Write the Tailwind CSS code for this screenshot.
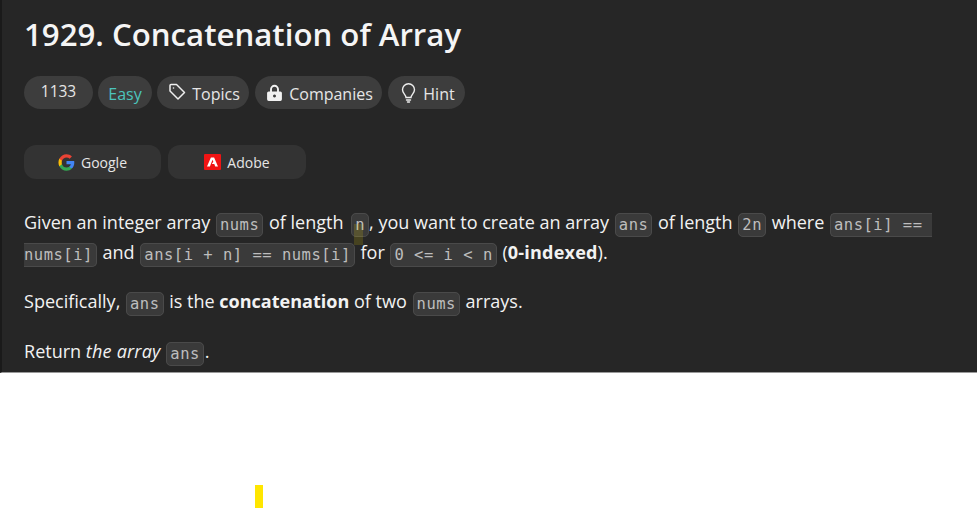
<!DOCTYPE html>
<html>
<head>
<meta charset="utf-8">
<script src="https://cdn.jsdelivr.net/npm/@tailwindcss/browser@4"></script>
</head>
<body class="relative bg-white w-[977px] h-[509px] overflow-hidden font-['Open_Sans','Noto_Sans',sans-serif]">
<main class="h-[373px] bg-[#262626] border-l-2 border-[#1a1a1a] border-b border-b-[#999] pl-[22px] pt-[12px] text-white overflow-hidden">
  <h1 class="text-[31.200px] leading-[44px] font-semibold text-[#f5f5f5]">1929. Concatenation of Array</h1>
  <div class="flex gap-[5px] mt-[20px] text-[#e6e6e6] text-[16px]">
    <span class="h-[33px] w-[69px] rounded-full bg-[#3d3d3d] flex items-center justify-center text-[15.500px] pb-[1px]">1133</span>
    <span class="h-[33px] w-[54px] rounded-full bg-[#3d3d3d] flex items-center justify-center text-[#4cc4bc] pt-[2px]">Easy</span>
    <span class="h-[33px] w-[92px] rounded-full bg-[#3d3d3d] flex items-center justify-center gap-[6px] pl-[2px]">
      <svg class="w-[18px] h-[18px] mb-[1px]" viewBox="0 0 18 18" fill="none" stroke="#eee" stroke-width="1.500" stroke-linejoin="round"><path d="M2 2.500 Q2 1.500 3 1.500 H8.500 L16.500 9.500 L10 16 L2 8 Z"/><circle cx="5.500" cy="5" r=".8" fill="#eee" stroke="none"/></svg>
      <span class="pt-[2px]">Topics</span>
    </span>
    <span class="ml-[1px] h-[33px] w-[127px] rounded-full bg-[#3d3d3d] flex items-center justify-center gap-[6px] pl-[2px]">
      <svg class="w-[17px] h-[18px]" viewBox="0 0 16 17" fill="#f2f2f2"><path fill-rule="evenodd" d="M2.500 7 H3.800 V5 a4.200 4.200 0 0 1 8.400 0 V7 H13.500 A1.500 1.500 0 0 1 15 8.500 V14.500 A1.500 1.500 0 0 1 13.500 16 H2.500 A1.500 1.500 0 0 1 1 14.500 V8.500 A1.500 1.500 0 0 1 2.500 7 Z M5.600 7 H10.400 V5 a2.400 2.400 0 0 0 -4.800 0 Z M8 10 a1.400 1.400 0 1 0 .01 0 Z"/></svg>
      <span class="pt-[2px]">Companies</span>
    </span>
    <span class="ml-[1px] h-[33px] w-[77px] rounded-full bg-[#3d3d3d] flex items-center justify-center gap-[7px] pl-[3px]">
      <svg class="w-[15px] h-[20px]" viewBox="0 0 15 20" fill="none" stroke="#eee" stroke-width="1.400" stroke-linecap="round"><path d="M5 14.500 C5 11.500 1.500 10.500 1.500 6.800 a6 6 0 0 1 12 0 C13.500 10.500 10 11.500 10 14.500 Z"/><path d="M5.500 17 H9.500 M6.500 19 H8.500"/></svg>
      <span class="pt-[2px]">Hint</span>
    </span>
  </div>
  <div class="flex gap-[7px] mt-[36px] text-[14px] text-[#e6e6e6]">
    <span class="h-[34px] w-[137px] rounded-[12px] bg-[#333333] flex items-center justify-center gap-[6px]">
      <svg class="w-[17px] h-[17px]" viewBox="0 0 48 48"><path fill="#4285F4" d="M46 24.500c0-1.600-.1-3.100-.4-4.500H24v8.700h12.400c-.5 2.800-2.100 5.200-4.500 6.800v5.600h7.300C43.500 36.700 46 31.100 46 24.500z"/><path fill="#34A853" d="M24 47c6.100 0 11.300-2 15.100-5.500l-7.300-5.600c-2 1.400-4.600 2.200-7.800 2.200-6 0-11-4-12.800-9.500H3.700v5.800C7.500 42 15.200 47 24 47z"/><path fill="#FBBC05" d="M11.200 28.600c-.5-1.400-.7-2.900-.7-4.600s.3-3.200.7-4.600v-5.800H3.700C2.200 16.600 1.300 20.200 1.300 24s.9 7.400 2.400 10.400l7.500-5.800z"/><path fill="#EA4335" d="M24 10c3.400 0 6.400 1.200 8.800 3.400l6.500-6.500C35.300 3.200 30.100 1 24 1 15.200 1 7.500 6 3.700 13.600l7.500 5.800C13 14 18 10 24 10z"/></svg>
      <span>Google</span>
    </span>
    <span class="h-[34px] w-[138px] rounded-[12px] bg-[#333333] flex items-center justify-center gap-[6px]">
      <svg class="w-[17px] h-[16px]" viewBox="0 0 17 16"><rect width="17" height="16" rx="1" fill="#f01414"/><path fill="#fff" d="M6.900 3.500 H10.100 L14 12.500 H11.200 L10.300 10 H7.800 L9.300 7.800 L8.500 5.800 L5.900 12.500 H3 Z"/></svg>
      <span>Adobe</span>
    </span>
  </div>
  <div class="mt-[30px] text-[18.050px] text-[#f2f2f2]">
    <p class="leading-[27px] whitespace-nowrap">Given an integer array <code class="mx-[1px] align-[-1px] font-['DejaVu_Sans_Mono',monospace] text-[15.500px] tracking-[.5px] text-[#bdbdbd] bg-[#3a3a3a] border border-[#4a4a4a] rounded-[5px] px-[3px] py-[2px]">nums</code> of length <code class="ml-[3px] mr-[0px] align-[-1px] font-['DejaVu_Sans_Mono',monospace] text-[15.500px] tracking-[.5px] text-[#bdbdbd] bg-[#3a3a3a] border border-[#4a4a4a] rounded-[5px] px-[3px] py-[2px]">n</code>, you want to create an array <code class="mx-[1px] align-[-1px] font-['DejaVu_Sans_Mono',monospace] text-[15.500px] tracking-[.5px] text-[#bdbdbd] bg-[#3a3a3a] border border-[#4a4a4a] rounded-[5px] px-[3px] py-[2px]">ans</code> of length <code class="mx-[1px] align-[-1px] font-['DejaVu_Sans_Mono',monospace] text-[15.500px] tracking-[.5px] text-[#bdbdbd] bg-[#3a3a3a] border border-[#4a4a4a] rounded-[5px] px-[3px] py-[2px]">2n</code> where <code class="ml-[1px] align-[-1px] font-['DejaVu_Sans_Mono',monospace] text-[15.500px] tracking-[.5px] text-[#bdbdbd] bg-[#3a3a3a] border border-[#4a4a4a] border-r-0 rounded-l-[5px] pl-[3px] pr-[9px] py-[2px]">ans[i] ==</code><br><code class="mr-[1px] align-[-1px] font-['DejaVu_Sans_Mono',monospace] text-[15.500px] tracking-[.5px] text-[#bdbdbd] bg-[#3a3a3a] border border-[#4a4a4a] border-l-0 rounded-r-[5px] pr-[3px] py-[2px]">nums[i]</code> and <code class="mx-[1px] align-[-1px] font-['DejaVu_Sans_Mono',monospace] text-[15.500px] tracking-[.5px] text-[#bdbdbd] bg-[#3a3a3a] border border-[#4a4a4a] rounded-[5px] px-[3px] py-[2px]">ans[i + n] == nums[i]</code> for <code class="mx-[1px] align-[-1px] font-['DejaVu_Sans_Mono',monospace] text-[15.500px] tracking-[.5px] text-[#bdbdbd] bg-[#3a3a3a] border border-[#4a4a4a] rounded-[5px] px-[3px] py-[2px]">0 &lt;= i &lt; n</code> (<strong class="font-bold tracking-[.2px]">0-indexed</strong>).</p>
    <p class="mt-[18px] leading-[28px] whitespace-nowrap">Specifically, <code class="mx-[1px] align-[-1px] font-['DejaVu_Sans_Mono',monospace] text-[15.500px] tracking-[.5px] text-[#bdbdbd] bg-[#3a3a3a] border border-[#4a4a4a] rounded-[5px] px-[3px] py-[2px]">ans</code> is the <strong class="font-bold">concatenation</strong> of two <code class="mx-[1px] align-[-1px] font-['DejaVu_Sans_Mono',monospace] text-[15.500px] tracking-[.5px] text-[#bdbdbd] bg-[#3a3a3a] border border-[#4a4a4a] rounded-[5px] px-[3px] py-[2px]">nums</code> arrays.</p>
    <p class="mt-[19px] leading-[28px] whitespace-nowrap">Return <em class="tracking-[.2px]">the array</em> <code class="mx-[1px] align-[-1px] font-['DejaVu_Sans_Mono',monospace] text-[15.500px] tracking-[.5px] text-[#bdbdbd] bg-[#3a3a3a] border border-[#4a4a4a] rounded-[5px] px-[3px] py-[2px]">ans</code>.</p>
  </div>
</main>
<div class="absolute left-[354px] top-[224px] w-[9px] h-[21px] bg-[#ffe600]/15"></div>
<div class="ml-[255px] mt-[112px] w-[8px] h-[23px] bg-[#ffe600]"></div>
</body>
</html>
